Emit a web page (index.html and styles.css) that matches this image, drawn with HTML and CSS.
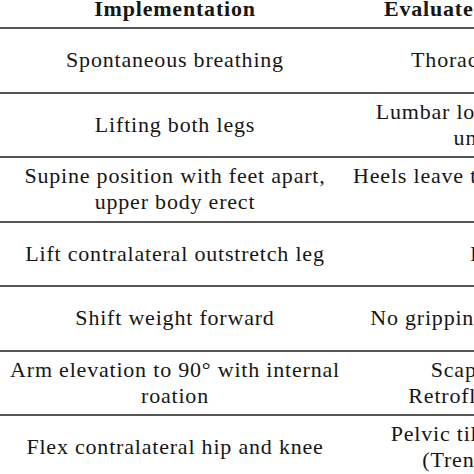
FILE: index.html
```html
<!DOCTYPE html>
<html>
<head>
<meta charset="utf-8">
<link rel="stylesheet" href="styles.css">
</head>
<body>
<div class="page">
  <div class="table">
    <div class="row head">
      <div class="cell">Implementation</div>
      <div class="cell">Evaluated compensation</div>
    </div>
    <div class="row">
      <div class="cell">Spontaneous breathing</div>
      <div class="cell">Thoracic respiration</div>
    </div>
    <div class="row">
      <div class="cell">Lifting both legs</div>
      <div class="cell">Lumbar lordosis remains as<br>unchanged.</div>
    </div>
    <div class="row">
      <div class="cell">Supine position with feet apart,<br>upper body erect</div>
      <div class="cell">Heels leave the floor, trunk falls<br>back</div>
    </div>
    <div class="row">
      <div class="cell">Lift contralateral outstretch leg</div>
      <div class="cell">Instable</div>
    </div>
    <div class="row">
      <div class="cell">Shift weight forward</div>
      <div class="cell">No gripping with all the toes</div>
    </div>
    <div class="row">
      <div class="cell">Arm elevation to 90° with internal<br>roation</div>
      <div class="cell">Scapulae alatae,<br>Retroflexion of arms</div>
    </div>
    <div class="row">
      <div class="cell">Flex contralateral hip and knee</div>
      <div class="cell">Pelvic tilting to one side<br>(Trendelenburg’s)</div>
    </div>
  </div>
</div>
</body>
</html>
```

FILE: styles.css
```css
html, body {
  margin: 0;
  padding: 0;
  background: #ffffff;
}

.page {
  width: 474px;
  height: 474px;
  overflow: hidden;
  font-family: "Liberation Serif", "Times New Roman", serif;
  font-size: 22px;
  line-height: 26px;
  letter-spacing: 0.8px;
  color: #161616;
}

.table {
  width: 666px;
  margin-top: -4px;
}

.row {
  display: grid;
  grid-template-columns: 350px 316px;
  align-items: center;
  height: 62.5px;
  border-bottom: 2px solid #555555;
}

.row.head {
  height: 31px;
  align-items: start;
  font-weight: bold;
}

.cell {
  text-align: center;
  white-space: nowrap;
}
```
